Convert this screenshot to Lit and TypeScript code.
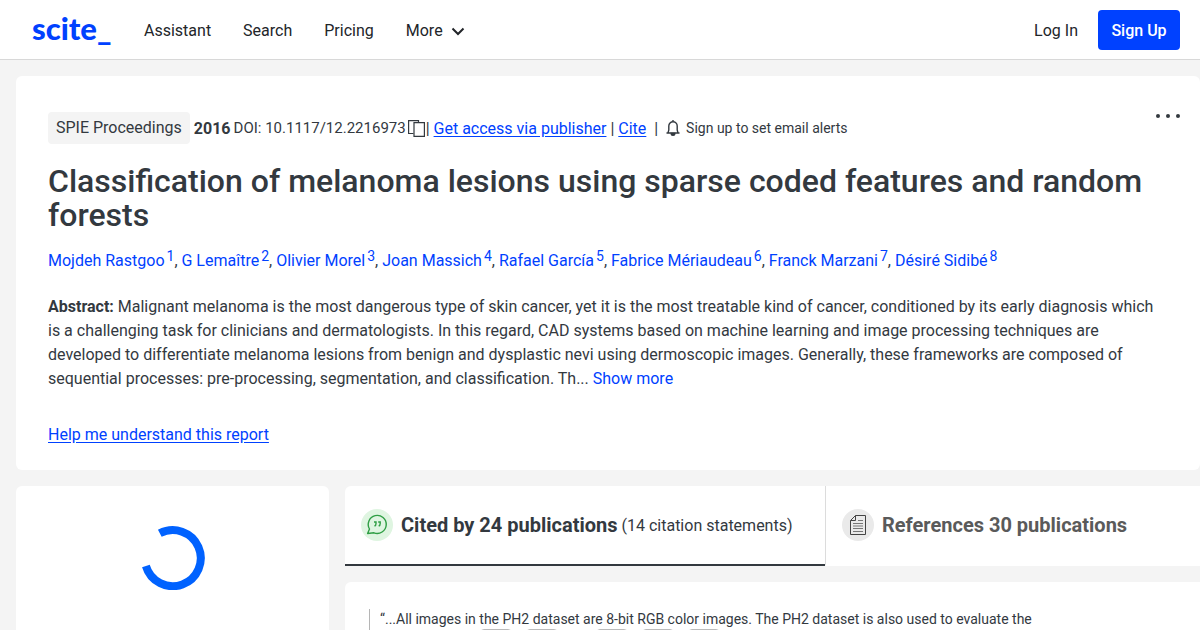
import { LitElement, html, css } from "lit";
import { customElement } from "lit/decorators.js";

const AUTHORS = [
  "Mojdeh Rastgoo",
  "G Lemaître",
  "Olivier Morel",
  "Joan Massich",
  "Rafael García",
  "Fabrice Mériaudeau",
  "Franck Marzani",
  "Désiré Sidibé",
];

@customElement("site-header")
class SiteHeader extends LitElement {
  static styles = css`
    :host { display: block; }
    .bar {
      display: flex; align-items: center; box-sizing: border-box; height: 60px;
      padding: 0 20px 0 32px; background: #fff; border-bottom: 1px solid #d8d8d8;
      color: #222529; font-size: 16px; line-height: 24px;
    }
    .logo { color: #0041ff; text-decoration: none; font: 900 31px/32px Lato, sans-serif; width: 80px; margin-right: 32px; padding-bottom: 4px; }
    nav { display: flex; gap: 32px; flex: 1; }
    .link { color: inherit; text-decoration: none; padding-top: 2px; }
    .more {
      display: flex; align-items: center; gap: 8px; padding: 2px 0 0; border: 0;
      background: none; font: inherit; color: inherit;
    }
    .signup {
      box-sizing: border-box; height: 40px; width: 82px; margin-left: 20px; padding: 2px 0 0; border: 0; border-radius: 4px;
      background: #0041ff; color: #fff; font: inherit; font-weight: 500;
    }
  `;
  render() {
    return html`<header class="bar">
      <a class="logo" href="#">scite_</a>
      <nav>
        <a class="link" href="#">Assistant</a><a class="link" href="#">Search</a><a class="link" href="#">Pricing</a>
        <button class="more">More
          <svg width="14" height="14" viewBox="0 0 14 14" fill="none" stroke="currentColor" stroke-width="2"><path d="M1.500 4.500l5.500 5.500 5.500-5.500"/></svg>
        </button>
      </nav>
      <a class="link" href="#">Log In</a>
      <button class="signup">Sign Up</button>
    </header>`;
  }
}

@customElement("paper-summary")
class PaperSummary extends LitElement {
  static styles = css`
    :host { display: block; }
    .card { background: #fff; border-radius: 6px; padding: 36px 32px 23px; }
    .top { display: flex; justify-content: space-between; align-items: flex-start; margin-right: -12px; }
    .meta { display: flex; align-items: center; height: 32px; white-space: pre; }
    .journal { background: #f4f4f4; border-radius: 4px; padding: 0 8px; line-height: 32px; margin-right: 4px; }
    .doi { font-size: 15px; margin-left: 3px; }
    a { color: #0041ff; text-decoration: none; }
    .under { text-decoration: underline; text-underline-offset: 2px; }
    .icon { display: flex; border: 0; padding: 0; background: none; color: inherit; font: inherit; }
    .alerts { align-items: center; gap: 6px; font-size: 14px; }
    .copy { margin: 0 1px 0 2px; }
    h1 { margin: 20px 0 17px; font-size: 32px; line-height: 34px; font-weight: 500; }
    .authors { line-height: 24px; }
    sup { font-size: 14px; line-height: 0; vertical-align: 5px; margin-left: 2px; }
    .abstract { margin: 22px 0 32px; line-height: 24px; }
    .help { line-height: 24px; display: block; }
  `;
  render() {
    return html`<section class="card">
      <div class="top">
        <div class="meta"><span class="journal">SPIE Proceedings</span><b>2016</b><span class="doi">DOI: 10.1117/12.2216973</span><button class="icon copy" aria-label="Copy DOI"><svg width="17" height="17" viewBox="0 0 17 17" fill="none" stroke="currentColor" stroke-width="1.200"><path d="M5.500 13.500h-4.900v-12.900h9.900v2"/><path d="M6 2.600h10.400v13.800h-10.400z"/></svg></button>| <a class="under" href="#">Get access via publisher</a> | <a class="under" href="#">Cite</a>  |  <button class="icon alerts"><svg width="14" height="18" viewBox="0 0 14 18" fill="none" stroke="currentColor" stroke-width="1.400"><path d="M.5 14h13M2 14l.8-3V7a4.200 4.200 0 0 1 8.400 0v4l.8 3M7 2.800V1"/><path d="M5.200 14.500a1.800 1.800 0 0 0 3.600 0z" fill="currentColor"/></svg>Sign up to set email alerts</button></div>
        <button class="icon" aria-label="More actions"><svg width="24" height="8" viewBox="0 0 24 8" fill="currentColor"><circle cx="2" cy="4" r="2"/><circle cx="12" cy="4" r="2"/><circle cx="22" cy="4" r="2"/></svg></button>
      </div>
      <h1>Classification of melanoma lesions using sparse coded features and random forests</h1>
      <div class="authors">${AUTHORS.map((a, i) => html`${i ? ", " : ""}<a href="#">${a}<sup>${i + 1}</sup></a>`)}</div>
      <p class="abstract"><b>Abstract:</b> Malignant melanoma is the most dangerous type of skin cancer, yet it is the most treatable kind of cancer, conditioned by its early diagnosis which is a challenging task for clinicians and dermatologists. In this regard, CAD systems based on machine learning and image processing techniques are developed to differentiate melanoma lesions from benign and dysplastic nevi using dermoscopic images. Generally, these frameworks are composed of sequential processes: pre-processing, segmentation, and classification. Th... <a href="#">Show more</a></p>
      <a class="under help" href="#">Help me understand this report</a>
    </section>`;
  }
}

@customElement("app-root")
class AppRoot extends LitElement {
  static styles = css`
    :host {
      display: block; height: 100vh; overflow: hidden; background: #f4f4f4;
      color: #33393f; font-family: Roboto, "Liberation Sans", sans-serif; font-size: 16px;
    }
    main { padding: 16px 0 0 16px; }
    .columns { display: grid; grid-template-columns: 313px 1fr; gap: 16px; margin-top: 16px; }
    .side { background: #fff; border-radius: 6px; min-height: 200px; padding-top: 40px; text-align: center; }
    .tabs { display: grid; grid-template-columns: 480px 1fr; height: 80px; }
    .tab {
      display: flex; align-items: center; box-sizing: border-box; padding: 0 16px; border: 0; background: #fff;
      color: inherit; font: inherit; white-space: pre; border-bottom: 2px solid #fff;
    }
    .tab.on { border-bottom-color: #33393f; border-top-left-radius: 6px; }
    .tab.off { border-left: 1px solid #dcdcdc; color: #5a5a5a; }
    .tab b { font-size: 20px; font-weight: 700; margin-left: 8px; }
    .quote-card { background: #fff; border-radius: 6px 0 0 0; margin-top: 16px; padding: 27px 24px; }
    blockquote { margin: 0; border-left: 1px solid #b5b5b5; padding-left: 10px; font-size: 14px; line-height: 20px; min-height: 80px; }
    .marks { display: flex; gap: 14px; padding-left: 100px; }
    .mark { width: 32px; height: 18px; box-sizing: border-box; border: 1px solid #bbb; border-radius: 4px; }
    .mark.wide { margin-right: 24px; }
  `;
  render() {
    return html`<site-header></site-header>
      <main>
        <paper-summary></paper-summary>
        <div class="columns">
          <aside class="side">
            <svg width="64" height="64" viewBox="0 0 64 64" fill="none" stroke="#0062ff" stroke-width="8"><path d="M18.800 7.300A28 28 0 1 1 4.900 40"/></svg>
          </aside>
          <div>
            <div class="tabs">
              <button class="tab on"><svg width="32" height="32" viewBox="0 0 32 32" fill="none" stroke="#2f9e44" stroke-width="1.400"><circle cx="16" cy="16" r="16" fill="#dff5e1" stroke="none"/><path d="M6.600 24.500l1.900-4.500a9 9 0 1 1 4.500 3.800z" stroke-linejoin="round"/><path d="M13 13h2v1.500q0 2-1.500 2.700M17.200 13h2v1.500q0 2-1.500 2.700"/></svg><b>Cited by 24 publications</b> (14 citation statements)</button>
              <button class="tab off"><svg width="32" height="32" viewBox="0 0 32 32" fill="none" stroke="#444"><circle cx="16" cy="16" r="16" fill="#eaeaea" stroke="none"/><path d="M13.500 6.500h10v19h-15v-14zM13.500 6.500v5h-5"/><path d="M16 11.500h5M11 14.500h10M11 17h10M11 19.500h10M11 22.500h10" stroke="#777"/></svg><b>References 30 publications</b></button>
            </div>
            <div class="quote-card"><blockquote>“...All images in the PH2 dataset are 8-bit RGB color images. The PH2 dataset is also used to evaluate the
              <div class="marks"><span class="mark"></span><span class="mark wide"></span><span class="mark"></span><span class="mark"></span><span class="mark"></span></div></blockquote></div>
          </div>
        </div>
      </main>`;
  }
}
